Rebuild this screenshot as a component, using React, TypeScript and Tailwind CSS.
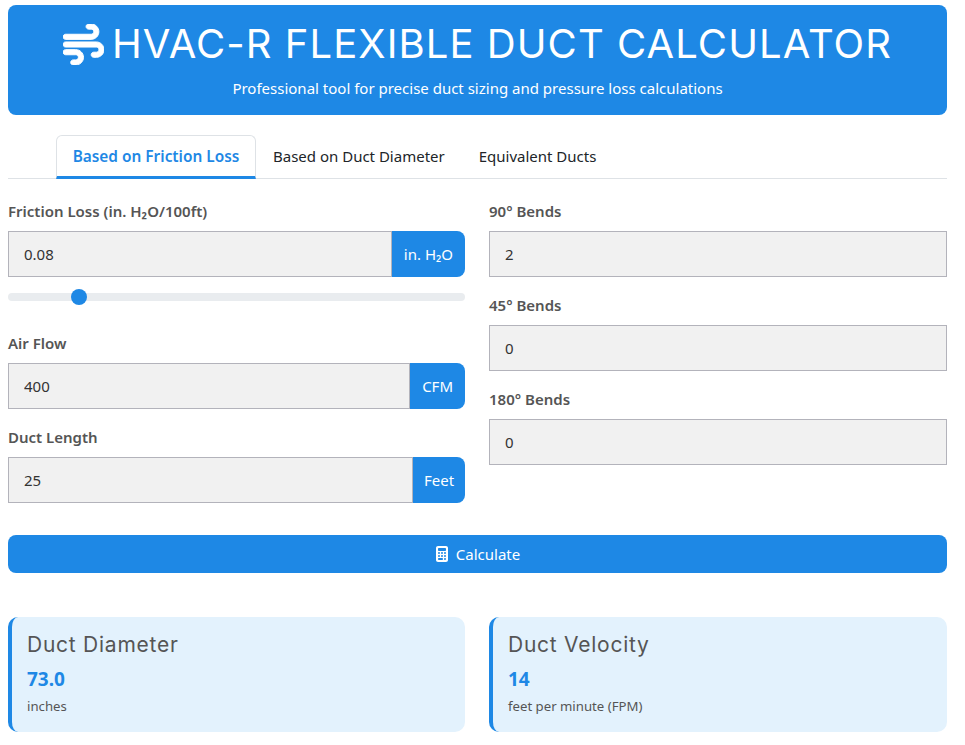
import { FaCalculator, FaWind } from 'react-icons/fa6';

const body = "font-['Noto_Sans','Open_Sans',sans-serif]";
const display = "font-['Inter','Noto_Sans',sans-serif]";

function Field({ label, value, unit, unitWidth }: { label: string; value: string; unit?: string; unitWidth?: string }) {
  return (
    <div>
      <label className="block h-[20px] text-[15px] leading-[20px] font-semibold text-[#555]">{label}</label>
      <div className="mt-[10px] flex h-[46px]">
        <input
          defaultValue={value}
          className="h-full min-w-0 flex-1 border border-[#b3b3bb] bg-[#f1f1f1] px-[15px] text-[15px] text-[#333] outline-none"
        />
        {unit && (
          <span className={`flex h-full items-center justify-center rounded-r-lg bg-[#1e88e5] px-3 text-[15px] text-white ${unitWidth ?? ''}`}>
            {unit}
          </span>
        )}
      </div>
    </div>
  );
}

function ResultCard({ title, value, unit }: { title: string; value: string; unit: string }) {
  return (
    <div className="h-[115px] rounded-[10px] border-l-4 border-[#1e88e5] bg-[#e3f2fd] pt-[15px] pr-4 pl-[15px]">
      <h3 className={`${display} text-[21px] leading-[26px] font-normal tracking-[0.75px] text-[#555]`}>{title}</h3>
      <p className="mt-[8px] text-[19px] leading-[26px] font-bold text-[#1e88e5]">{value}</p>
      <p className="mt-[5px] text-[13.2px] leading-[18px] text-[#555]">{unit}</p>
    </div>
  );
}

export default function App() {
  return (
    <div className={`${body} h-[745px] overflow-hidden bg-white pt-[5px] pr-[18px] pl-2`}>
      {/* Header */}
      <header className="flex h-[110px] flex-col items-center rounded-lg bg-[#1e88e5] pt-[13px] text-white">
        <h1 className={`${display} flex items-center gap-[8px] text-[40px] leading-[52px] font-normal tracking-[1.07px]`}>
          <FaWind className="h-[41px] w-[41px]" stroke="currentColor" strokeWidth={12} />
          HVAC-R FLEXIBLE DUCT CALCULATOR
        </h1>
        <p className="mt-[7px] text-[15px] leading-[22px]">
          Professional tool for precise duct sizing and pressure loss calculations
        </p>
      </header>

      {/* Tabs */}
      <nav className="mt-5 flex h-[44px] border-b border-[#dee2e6] pl-12 text-[15px]">
        <button className="h-[44px] w-[200px] rounded-t-md border border-b-[3px] border-[#dee2e6] border-b-[#1e88e5] pt-[2px] text-[15.4px] font-semibold text-[#1e88e5]">
          Based on Friction Loss
        </button>
        <button className="h-[44px] px-[17px] pb-[2px] text-[#212529]">Based on Duct Diameter</button>
        <button className="h-[44px] px-[17px] pb-[2px] text-[#212529]">Equivalent Ducts</button>
      </nav>

      {/* Form */}
      <div className="mt-[22px] grid grid-cols-[457px_1fr] gap-6">
        <div>
          <Field label="Friction Loss (in. H₂O/100ft)" value="0.08" unit="in. H₂O" />
          <input
            type="range"
            min="0.01"
            max="0.5"
            step="0.01"
            defaultValue="0.08"
            className="mt-4 mb-[32px] block h-2 w-full appearance-none rounded bg-[#e9ecef] [&::-webkit-slider-thumb]:h-4 [&::-webkit-slider-thumb]:w-4 [&::-webkit-slider-thumb]:appearance-none [&::-webkit-slider-thumb]:rounded-full [&::-webkit-slider-thumb]:bg-[#1e88e5]"
          />
          <div className="flex flex-col gap-[18px]">
            <Field label="Air Flow" value="400" unit="CFM" />
            <Field label="Duct Length" value="25" unit="Feet" unitWidth="w-[52px]" />
          </div>
        </div>
        <div className="flex flex-col gap-[18px]">
          <Field label="90° Bends" value="2" />
          <Field label="45° Bends" value="0" />
          <Field label="180° Bends" value="0" />
        </div>
      </div>

      <button className="mt-[32px] flex h-[38px] w-full items-center justify-center gap-[7px] rounded-lg bg-[#1e88e5] text-[15px] text-white">
        <FaCalculator className="h-4 w-[14px]" />
        Calculate
      </button>

      {/* Results */}
      <div className="mt-11 grid grid-cols-[457px_1fr] gap-6">
        <ResultCard title="Duct Diameter" value="73.0" unit="inches" />
        <ResultCard title="Duct Velocity" value="14" unit="feet per minute (FPM)" />
      </div>
    </div>
  );
}
